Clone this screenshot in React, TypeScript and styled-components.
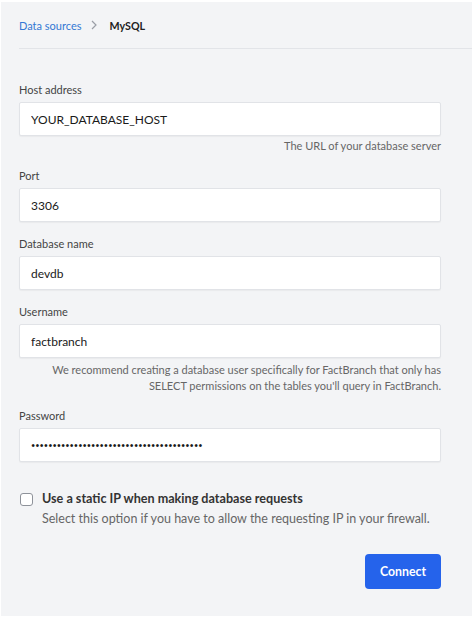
import styled, { createGlobalStyle } from "styled-components";

const GlobalStyle = createGlobalStyle`
  html, body {
    margin: 0;
    padding: 0;
    background: #ffffff;
  }
  body {
    font-family: "Lato", "Liberation Sans", sans-serif;
    -webkit-font-smoothing: antialiased;
  }
`;

const Page = styled.div`
  width: 471px;
  height: 614px;
  margin: 2px 0 0 1px;
  background: #f3f4f6;
  box-sizing: border-box;
  overflow: hidden;
`;

const Breadcrumb = styled.nav`
  display: flex;
  align-items: center;
  margin-left: 18px;
  height: 46px;
  border-bottom: 1px solid #e2e4e8;
  font-size: 11px;
`;

const Crumb = styled.a`
  color: #3478d4;
  text-decoration: none;
`;

const Current = styled.span`
  color: #222;
  font-size: 10.7px;
  font-weight: 700;
`;

const Chevron = styled.svg`
  width: 8px;
  height: 10px;
  margin: 0 11px 0 9px;
`;

const Form = styled.form`
  display: flex;
  flex-direction: column;
  padding: 32px 0 0 18px;
`;

const Field = styled.div`
  display: flex;
  flex-direction: column;
  width: 422px;
  margin-bottom: 13px;
`;

const Label = styled.label`
  font-size: 11px;
  line-height: 18px;
  color: #444;
  margin-bottom: 3px;
`;

const Input = styled.input<{ $secret?: boolean }>`
  box-sizing: border-box;
  height: 34px;
  padding: 0 11px;
  border: 1px solid #e1e3e7;
  border-radius: 2px;
  background: #fff;
  box-shadow: 0 1px 1px rgba(0, 0, 0, 0.04);
  font-family: inherit;
  font-size: ${(p) => (p.$secret ? "7.4px" : "12px")};
  color: #1a1a1a;
  outline: none;
`;

const Help = styled.p<{ $gap?: number }>`
  margin: ${(p) => p.$gap ?? 2}px 0 0;
  font-size: 11px;
  line-height: 16px;
  color: #666;
  text-align: right;
`;

const CheckRow = styled.div`
  display: flex;
  align-items: flex-start;
  gap: 9px;
  margin-top: 14px;
`;

const Box = styled.span`
  flex: none;
  width: 11px;
  height: 11px;
  margin: 4px 0 0 1px;
  border: 1.3px solid #8e929a;
  border-radius: 3px;
  background: #fff;
`;

const CheckText = styled.div`
  display: flex;
  flex-direction: column;
`;

const CheckTitle = styled.span`
  font-size: 12.6px;
  line-height: 20px;
  font-weight: 700;
  color: #333;
`;

const CheckSub = styled.span`
  font-size: 12.5px;
  line-height: 20px;
  color: #666;
  white-space: nowrap;
`;

const Actions = styled.div`
  display: flex;
  justify-content: flex-end;
  width: 422px;
  margin-top: 25px;
`;

const Button = styled.button`
  height: 35px;
  padding: 0 15px;
  border: none;
  border-radius: 4px;
  background: #2563eb;
  color: #fff;
  font-family: inherit;
  font-size: 12.3px;
  font-weight: 700;
`;

export default function App() {
  return (
    <>
      <GlobalStyle />
      <Page>
        <Breadcrumb>
          <Crumb href="#">Data sources</Crumb>
          <Chevron viewBox="0 0 8 10">
            <path d="M2 1l4 4-4 4" fill="none" stroke="#9a9ea6" strokeWidth="1.2" />
          </Chevron>
          <Current>MySQL</Current>
        </Breadcrumb>
        <Form>
          <Field>
            <Label>Host address</Label>
            <Input defaultValue="YOUR_DATABASE_HOST" />
            <Help>The URL of your database server</Help>
          </Field>
          <Field>
            <Label>Port</Label>
            <Input defaultValue="3306" />
          </Field>
          <Field>
            <Label>Database name</Label>
            <Input defaultValue="devdb" />
          </Field>
          <Field>
            <Label>Username</Label>
            <Input defaultValue="factbranch" />
            <Help $gap={4}>
              We recommend creating a database user specifically for FactBranch that only has
              <br />
              SELECT permissions on the tables you'll query in FactBranch.
            </Help>
          </Field>
          <Field>
            <Label>Password</Label>
            <Input $secret type="password" defaultValue={"x".repeat(40)} />
          </Field>
          <CheckRow>
            <Box />
            <CheckText>
              <CheckTitle>Use a static IP when making database requests</CheckTitle>
              <CheckSub>Select this option if you have to allow the requesting IP in your firewall.</CheckSub>
            </CheckText>
          </CheckRow>
          <Actions>
            <Button type="button">Connect</Button>
          </Actions>
        </Form>
      </Page>
    </>
  );
}
